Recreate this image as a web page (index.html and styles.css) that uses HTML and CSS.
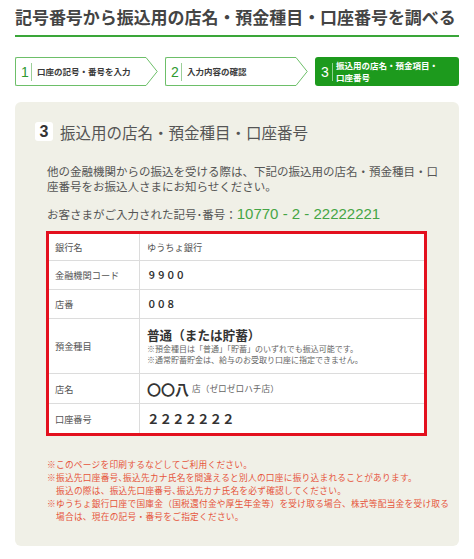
FILE: index.html
```html
<!DOCTYPE html>
<html lang="ja">
<head>
<meta charset="utf-8">
<title>記号番号から振込用の店名・預金種目・口座番号を調べる</title>
<link rel="stylesheet" href="styles.css">
</head>
<body>
<div class="page">
  <h1 class="title">記号番号から振込用の店名・預金種目・口座番号を調べる</h1>

  <div class="steps">
    <div class="step">
      <div class="step-body"><span class="step-num">1</span><span class="step-sep"></span><span class="step-label">口座の記号・番号を入力</span></div>
      <svg class="chev" width="12" height="29" viewBox="0 0 12 29"><path d="M0 0.5 L11.2 14.5 L0 28.5" fill="#fff" stroke="#6dbf69" stroke-width="1"/></svg>
    </div>
    <div class="step">
      <div class="step-body"><span class="step-num">2</span><span class="step-sep"></span><span class="step-label">入力内容の確認</span></div>
      <svg class="chev" width="12" height="29" viewBox="0 0 12 29"><path d="M0 0.5 L11.2 14.5 L0 28.5" fill="#fff" stroke="#6dbf69" stroke-width="1"/></svg>
    </div>
    <div class="step step-active">
      <div class="step-body"><span class="step-num">3</span><span class="step-sep"></span><span class="step-label">振込用の店名・預金項目・<br>口座番号</span></div>
    </div>
  </div>

  <div class="panel">
    <div class="panel-head"><span class="head-num">3</span><span class="head-text">振込用の店名・預金種目・口座番号</span></div>
    <p class="lead">他の金融機関からの振込を受ける際は、下記の振込用の店名・預金種目・口<br>座番号をお振込人さまにお知らせください。</p>
    <p class="entered">お客さまがご入力された記号･番号：<span class="entered-num">10770 - 2 - 22222221</span></p>

    <div class="info">
      <div class="cell label r1">銀行名</div>
      <div class="cell value r1">ゆうちょ銀行</div>
      <div class="cell label r2">金融機関コード</div>
      <div class="cell value r2 digits">９９００</div>
      <div class="cell label r3">店番</div>
      <div class="cell value r3 digits">００８</div>
      <div class="cell label r4">預金種目</div>
      <div class="cell value r4 stack">
        <span class="kind">普通（または貯蓄）</span>
        <span class="small">※預金種目は「普通」「貯蓄」のいずれでも振込可能です。</span>
        <span class="small">※通常貯蓄貯金は、給与のお受取り口座に指定できません。</span>
      </div>
      <div class="cell label r5">店名</div>
      <div class="cell value r5"><span class="branch">〇〇八</span><span class="branch-sub">店（ゼロゼロハチ店）</span></div>
      <div class="cell label r6 last">口座番号</div>
      <div class="cell value r6 last digits big">２２２２２２２</div>
    </div>

    <ul class="notes">
      <li>※このページを印刷するなどしてご利用ください。</li>
      <li>※振込先口座番号､振込先カナ氏名を間違えると別人の口座に振り込まれることがあります。<br>振込の際は、振込先口座番号､振込先カナ氏名を必ず確認してください。</li>
      <li>※ゆうちょ銀行口座で国庫金（国税還付金や厚生年金等）を受け取る場合、株式等配当金を受け取る<br>場合は、現在の記号・番号をご指定ください。</li>
    </ul>
  </div>
</div>
</body>
</html>
```
FILE: styles.css
```css
* { box-sizing: border-box; }
html, body { margin: 0; padding: 0; background: #fff; }
body {
  font-family: "Noto Sans CJK JP", "Noto Sans", sans-serif;
  color: #444;
}
.page { width: 474px; padding: 0 15px; }

.title {
  margin: 0;
  padding: 5px 0 0 0;
  height: 37px;
  font-size: 17px;
  line-height: 24px;
  font-weight: bold;
  color: #444;
  letter-spacing: -0.05px;
  border-bottom: 2px solid #3aa639;
  white-space: nowrap;
}

.steps {
  display: flex;
  gap: 7px;
  margin-top: 20px;
  height: 29px;
}
.step { display: flex; width: 143px; height: 29px; }
.step-body {
  flex: 1;
  display: flex;
  align-items: center;
  border: 1px solid #6dbf69;
  border-right: none;
  border-radius: 2px 0 0 2px;
  background: #fff;
  padding-left: 5px;
}
.chev { display: block; flex: none; }
.step-num {
  font-family: "Liberation Sans", Arial, sans-serif;
  font-size: 14px;
  color: #2f9a2f;
  width: 9px;
}
.step-sep {
  width: 1px;
  height: 18px;
  background: #9ccf99;
  margin: 0 5px 0 1px;
}
.step-label {
  font-size: 8.5px;
  line-height: 11.5px;
  font-weight: bold;
  color: #3a3a3a;
  white-space: nowrap;
}
.step-active { width: 144px; }
.step-active .step-body {
  background: #1d9a1d;
  border: none;
  border-radius: 3px;
  padding-left: 6px;
}
.step-active .step-num { color: #fff; width: 10px; }
.step-active .step-sep { background: #8fd08f; margin: 0 3px 0 1px; }
.step-active .step-label { color: #fff; }

.panel {
  margin-top: 16px;
  background: #f0f0e7;
  border-radius: 6px;
  padding: 20px 0 23px 0;
}
.panel-head {
  display: flex;
  align-items: center;
  margin-left: 20px;
  height: 19px;
}
.head-num {
  display: flex;
  align-items: center;
  justify-content: center;
  width: 18px;
  height: 19px;
  background: #fff;
  border-radius: 3px;
  font-family: "Liberation Sans", Arial, sans-serif;
  font-size: 16px;
  font-weight: bold;
  color: #333;
}
.head-text {
  margin-left: 7px;
  font-size: 15.5px;
  color: #555;
  white-space: nowrap;
}
.lead {
  margin: 23px 0 0 32px;
  font-size: 11.5px;
  line-height: 15px;
  color: #555;
  white-space: nowrap;
}
.entered {
  margin: 10px 0 0 32px;
  font-size: 11.5px;
  line-height: 20px;
  color: #555;
  white-space: nowrap;
}
.entered-num {
  font-family: "Liberation Sans", Arial, sans-serif;
  font-size: 15px;
  color: #45a545;
}

.info {
  margin: 7px 0 0 31px;
  width: 381px;
  border: 3px solid #e3101e;
  background: #fff;
  display: grid;
  grid-template-columns: 91px 1fr;
}
.cell {
  display: flex;
  align-items: center;
  border-bottom: 1px solid #dcdcdc;
  font-size: 9.2px;
  color: #555;
  white-space: nowrap;
}
.cell.last { border-bottom: none; }
.label { border-right: 1px solid #dcdcdc; padding-left: 6px; }
.value { padding-left: 7px; }
.r1 { height: 27px; }
.r2 { height: 29px; }
.r3 { height: 29px; }
.r4 { height: 55px; }
.r5 { height: 30px; }
.r6 { height: 29px; }
.digits { font-weight: bold; font-size: 9.5px; color: #333; }
.digits.big { font-size: 12.5px; }
.stack { flex-direction: column; align-items: flex-start; justify-content: center; }
.kind { font-size: 12.6px; font-weight: bold; color: #333; line-height: 16px; }
.small { font-size: 8px; line-height: 11px; color: #666; }
.branch { font-size: 14px; font-weight: bold; color: #333; }
.branch-sub { font-size: 8.7px; color: #666; margin-left: 3px; }

.notes {
  list-style: none;
  margin: 22px 0 0 32px;
  padding: 0;
  font-size: 8.7px;
  line-height: 13px;
  letter-spacing: 0.25px;
  color: #e6553c;
  white-space: nowrap;
}
.notes li { padding-left: 9px; text-indent: -9px; }
```
